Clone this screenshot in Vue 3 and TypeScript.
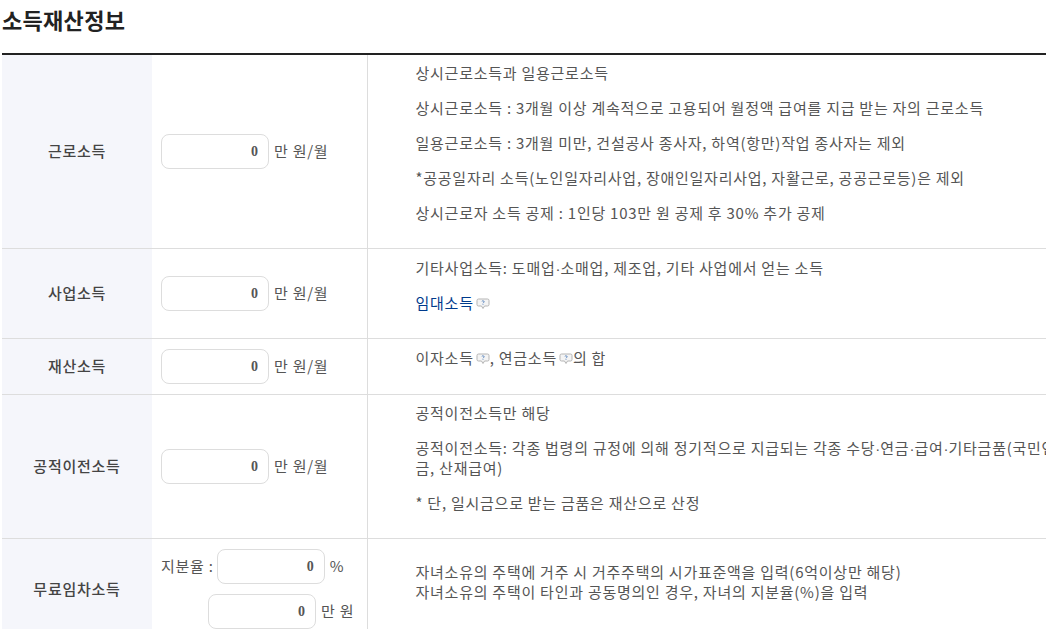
<script setup lang="ts">
interface IncomeRow {
  label: string
  unit: string
}

const simpleRow = (label: string): IncomeRow => ({ label, unit: '만 원/월' })

const earned = simpleRow('근로소득')
const business = simpleRow('사업소득')
const property = simpleRow('재산소득')
const transfer = simpleRow('공적이전소득')
</script>

<template>
  <div class="page">
    <h2 class="title">소득재산정보</h2>
    <table class="info-table">
      <colgroup>
        <col class="col-head" />
        <col class="col-input" />
        <col />
      </colgroup>
      <tbody>
        <tr>
          <th>{{ earned.label }}</th>
          <td class="input-cell">
            <div class="field">
              <input class="num" type="text" value="0" />
              <span>{{ earned.unit }}</span>
            </div>
          </td>
          <td class="desc tight">
            <p>상시근로소득과 일용근로소득</p>
            <p>상시근로소득 : 3개월 이상 계속적으로 고용되어 월정액 급여를 지급 받는 자의 근로소득</p>
            <p>일용근로소득 : 3개월 미만, 건설공사 종사자, 하역(항만)작업 종사자는 제외</p>
            <p>*공공일자리 소득(노인일자리사업, 장애인일자리사업, 자활근로, 공공근로등)은 제외</p>
            <p>상시근로자 소득 공제 : 1인당 103만 원 공제 후 30% 추가 공제</p>
          </td>
        </tr>
        <tr>
          <th>{{ business.label }}</th>
          <td class="input-cell">
            <div class="field">
              <input class="num" type="text" value="0" />
              <span>{{ business.unit }}</span>
            </div>
          </td>
          <td class="desc roomy">
            <p>기타사업소득: 도매업<span class="dot">·</span>소매업, 제조업, 기타 사업에서 얻는 소득</p>
            <p>
              <a class="link">임대소득</a>
              <svg class="help" width="14" height="12" viewBox="0 0 14 12">
                <path d="M2.5 1h9a1.5 1.5 0 0 1 1.5 1.5v4A1.5 1.5 0 0 1 11.500 8H8.500L7 10.500 5.500 8h-3A1.500 1.500 0 0 1 1 6.500v-4A1.500 1.500 0 0 1 2.500 1z" fill="#f4f4f4" stroke="#b5b5b5" />
                <path d="M5.800 3.300c.3-.6 2.400-.7 2.400.5 0 .8-1.200.8-1.200 1.500M7 6v.7" fill="none" stroke="#4a78b8" stroke-width=".9" />
              </svg>
            </p>
          </td>
        </tr>
        <tr class="short">
          <th>{{ property.label }}</th>
          <td class="input-cell">
            <div class="field">
              <input class="num" type="text" value="0" />
              <span>{{ property.unit }}</span>
            </div>
          </td>
          <td class="desc">
            <p>
              이자소득<svg class="help" width="14" height="12" viewBox="0 0 14 12">
                <path d="M2.5 1h9a1.5 1.5 0 0 1 1.5 1.5v4A1.5 1.5 0 0 1 11.500 8H8.500L7 10.500 5.500 8h-3A1.500 1.500 0 0 1 1 6.500v-4A1.500 1.500 0 0 1 2.500 1z" fill="#f4f4f4" stroke="#b5b5b5" />
                <path d="M5.800 3.300c.3-.6 2.400-.7 2.400.5 0 .8-1.200.8-1.200 1.500M7 6v.7" fill="none" stroke="#4a78b8" stroke-width=".9" />
              </svg>, 연금소득<svg class="help" width="14" height="12" viewBox="0 0 14 12">
                <path d="M2.5 1h9a1.5 1.5 0 0 1 1.5 1.5v4A1.5 1.5 0 0 1 11.500 8H8.500L7 10.500 5.500 8h-3A1.500 1.500 0 0 1 1 6.500v-4A1.500 1.500 0 0 1 2.500 1z" fill="#f4f4f4" stroke="#b5b5b5" />
                <path d="M5.800 3.300c.3-.6 2.400-.7 2.400.5 0 .8-1.200.8-1.200 1.500M7 6v.7" fill="none" stroke="#4a78b8" stroke-width=".9" />
              </svg>의 합
            </p>
          </td>
        </tr>
        <tr>
          <th>{{ transfer.label }}</th>
          <td class="input-cell">
            <div class="field">
              <input class="num" type="text" value="0" />
              <span>{{ transfer.unit }}</span>
            </div>
          </td>
          <td class="desc tight">
            <p>공적이전소득만 해당</p>
            <p>공적이전소득: 각종 법령의 규정에 의해 정기적으로 지급되는 각종 수당<span class="dot">·</span>연금<span class="dot">·</span>급여<span class="dot">·</span>기타금품(국민연금, 산재급여)</p>
            <p>* 단, 일시금으로 받는 금품은 재산으로 산정</p>
          </td>
        </tr>
        <tr>
          <th>무료임차소득</th>
          <td class="input-cell stacked">
            <div class="field">
              <span class="prefix">지분율 :</span>
              <input class="num" type="text" value="0" />
              <span>%</span>
            </div>
            <div class="field second">
              <input class="num" type="text" value="0" />
              <span>만 원</span>
            </div>
          </td>
          <td class="desc last">
            <p>자녀소유의 주택에 거주 시 거주주택의 시가표준액을 입력(6억이상만 해당)<br />자녀소유의 주택이 타인과 공동명의인 경우, 자녀의 지분율(%)을 입력</p>
          </td>
        </tr>
      </tbody>
    </table>
  </div>
</template>

<style>
html,
body {
  margin: 0;
  overflow: hidden;
  background: #fff;
}
</style>

<style scoped>
.page {
  width: 1046px;
  height: 629px;
  overflow: hidden;
  font-family: "Noto Sans CJK KR", "Noto Sans", sans-serif;
  font-size: 15px;
  letter-spacing: 0.75px;
  color: #555;
}

.title {
  margin: 0;
  padding: 4px 0 0 2px;
  height: 53px;
  box-sizing: border-box;
  font-size: 22px;
  line-height: 30px;
  letter-spacing: 0.3px;
  font-weight: 700;
  color: #222;
}

.info-table {
  width: 1055px;
  margin-left: 2px;
  border-collapse: collapse;
  table-layout: fixed;
  border-top: 2px solid #222;
}

.col-head {
  width: 150px;
}

.col-input {
  width: 215px;
}

th {
  background: #f5f6fb;
  font-weight: 500;
  color: #444;
  text-align: center;
  border-bottom: 1px solid #ddd;
  padding: 0 0 2px;
}

td {
  border-bottom: 1px solid #ddd;
  vertical-align: middle;
}

.short {
  height: 56px;
}

.input-cell {
  padding: 0 0 0 9px;
  border-right: 1px solid #ddd;
}

.stacked {
  padding-top: 10px;
  padding-bottom: 10px;
}

.field {
  display: flex;
  align-items: center;
  gap: 5px;
}

.field span {
  position: relative;
  top: -1px;
}

.second {
  margin-left: 47px;
  margin-top: 10px;
}

.prefix {
  margin-right: -2px;
}

.num {
  width: 108px;
  height: 35px;
  box-sizing: border-box;
  border: 1px solid #ddd;
  border-radius: 8px;
  padding: 0 10px;
  text-align: right;
  font-family: "Liberation Serif", serif;
  font-size: 14px;
  font-weight: 700;
  color: #555;
  background: #fff;
  outline: none;
}

.desc {
  padding: 9px 0 9px 48px;
  vertical-align: top;
}

.desc.tight {
  padding-top: 8px;
  padding-bottom: 10px;
}

.desc.roomy {
  padding-bottom: 10px;
}

.desc.last {
  vertical-align: middle;
}

.desc p {
  margin: 0 0 15px;
  line-height: 20px;
}

.dot {
  display: inline-block;
  line-height: 1;
  font-family: "Liberation Sans", sans-serif;
  letter-spacing: 0;
}

.link {
  color: #003a8c;
}

.help {
  vertical-align: -1px;
  margin-left: 2px;
}
</style>
